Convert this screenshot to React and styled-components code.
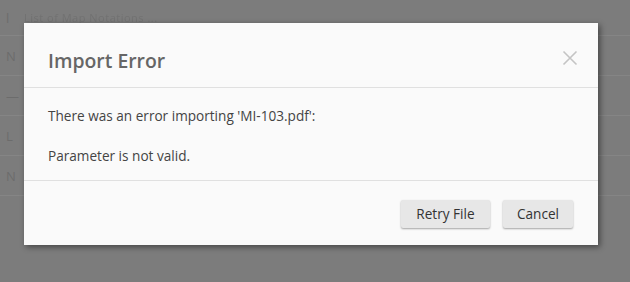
import React from "react";
import styled, { createGlobalStyle } from "styled-components";

const Global = createGlobalStyle`
  html, body { margin: 0; padding: 0; }
  body {
    width: 630px; height: 282px; overflow: hidden;
    background: #7c7c7c;
    font-family: "Open Sans", "Liberation Sans", sans-serif;
  }
`;

const Page = styled.div`
  position: relative;
  width: 630px;
  height: 282px;
  overflow: hidden;
  background: #7c7c7c;
`;

const List = styled.div`
  display: flex;
  flex-direction: column;
`;

const Row = styled.div`
  height: ${(p) => p.$h || 40}px;
  box-sizing: border-box;
  border-bottom: 1px solid #858585;
  display: flex;
  align-items: center;
  padding-left: 6px;
  gap: 10px;
  font-size: 12px;
`;

const Letter = styled.span`
  width: 8px;
  color: #6c6c6c;
  font-size: 13px;
`;

const Dot = styled.span`
  width: 16px;
  height: 16px;
  border-radius: 50%;
  background: #8a8a8a;
`;

const Faint = styled.span`
  color: #727272;
  font-size: 11px;
  letter-spacing: 0.5px;
  filter: blur(0.6px);
`;

const Dialog = styled.div`
  position: absolute;
  left: 24px;
  top: 23px;
  width: 574px;
  height: 222px;
  background: #fafafa;
  box-shadow: 2px 2px 6px rgba(0, 0, 0, 0.45);
  display: flex;
  flex-direction: column;
`;

const Header = styled.div`
  height: 65px;
  box-sizing: border-box;
  border-bottom: 1px solid #e0e0e0;
  display: flex;
  align-items: center;
  justify-content: space-between;
  padding: 0 20px 0 24px;
`;

const Title = styled.h2`
  margin: 0;
  margin-top: 10px;
  font-size: 19.4px;
  font-weight: 600;
  color: #666;
`;

const Close = styled.button`
  border: 0;
  background: transparent;
  padding: 0;
  width: 16px;
  height: 16px;
  margin-top: 5px;
  cursor: pointer;
  display: flex;
`;

const Body = styled.div`
  height: 93px;
  box-sizing: border-box;
  border-bottom: 1px solid #e0e0e0;
  padding: 18px 24px 0;
  color: #444;
  font-size: 13.6px;
  line-height: 20px;
`;

const Para = styled.p`
  margin: 0 0 20px;
`;

const Footer = styled.div`
  flex: 1;
  display: flex;
  justify-content: flex-end;
  align-items: center;
  gap: 13px;
  padding: 1px 25px 0 0;
`;

const Button = styled.button`
  height: 28px;
  padding: 0 14px;
  border: 0;
  border-radius: 2px;
  background: #e7e7e7;
  box-shadow: 0 1px 2px rgba(0, 0, 0, 0.35);
  color: #333;
  font-family: "Open Sans", "Liberation Sans", sans-serif;
  font-size: 13.6px;
  min-width: ${(p) => p.$w}px;
  cursor: pointer;
`;

export default function App() {
  return (
    <Page>
      <Global />
      <List>
        <Row $h={36}>
          <Letter>l</Letter>
          <Faint>List of Map Notations ...</Faint>
        </Row>
        <Row><Letter>N</Letter><Dot /></Row>
        <Row><Letter>—</Letter><Dot /></Row>
        <Row><Letter>L</Letter><Dot /></Row>
        <Row><Letter>N</Letter><Dot /></Row>
      </List>
      <Dialog>
        <Header>
          <Title>Import Error</Title>
          <Close aria-label="Close">
            <svg width="16" height="16" viewBox="0 0 16 16">
              <path d="M1.5 1.5 L14.5 14.5 M14.5 1.5 L1.5 14.5" stroke="#c4c4c4" strokeWidth="1.6" fill="none" />
            </svg>
          </Close>
        </Header>
        <Body>
          <Para>There was an error importing 'MI-103.pdf':</Para>
          <Para>Parameter is not valid.</Para>
        </Body>
        <Footer>
          <Button $w={89}>Retry File</Button>
          <Button $w={70}>Cancel</Button>
        </Footer>
      </Dialog>
    </Page>
  );
}
